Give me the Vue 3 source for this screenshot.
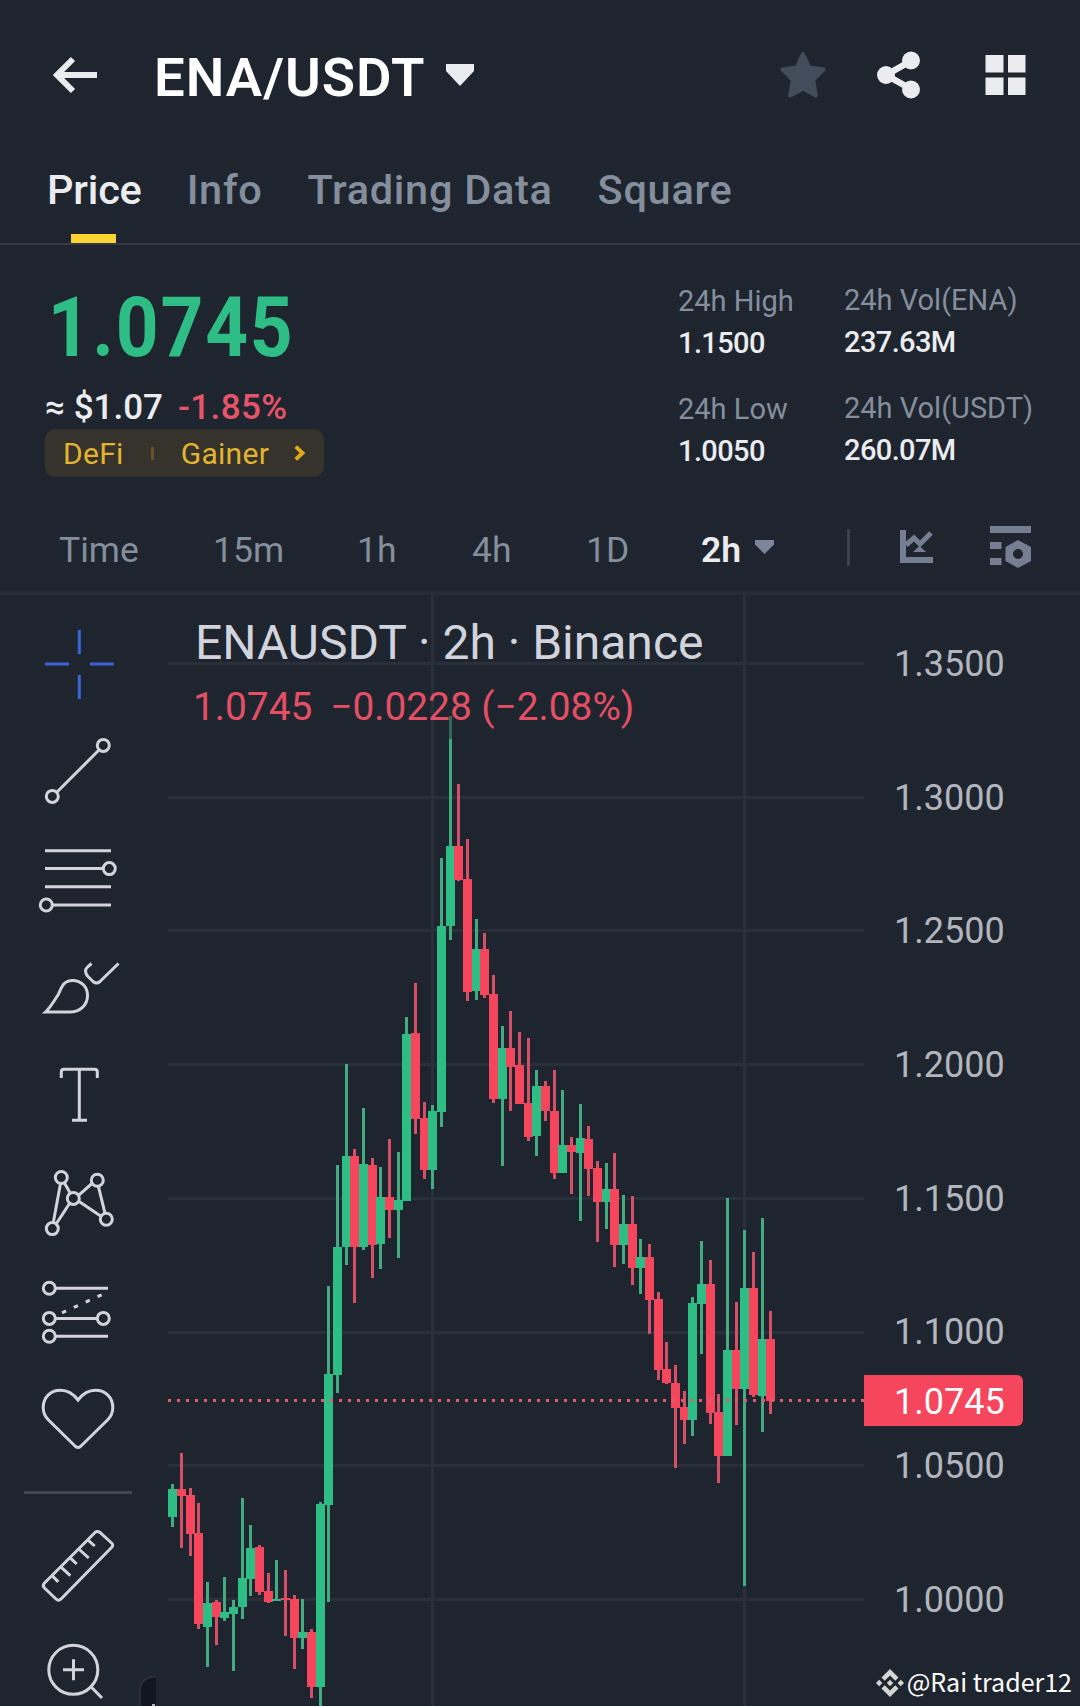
<template>
  <div class="trade-page">
    <header class="top-bar">
      <svg class="back-icon" viewBox="0 0 46 38">
        <path d="M45 19H5M21 3L5 19L21 35" fill="none" stroke="#eaecef" stroke-width="6" />
      </svg>
      <h1 class="pair-name">ENA/USDT</h1>
      <svg class="pair-caret" viewBox="0 0 28 22">
        <path d="M0 0H28V7L14 22L0 7Z" fill="#eaecef" />
      </svg>
      <div class="top-actions">
        <svg class="star-icon" viewBox="0 0 46 48">
          <path
            d="M23 3L29.3 16.5L43.5 18.5L33.2 28.8L35.8 44.5L23 37.5L10.2 44.5L12.8 28.8L2.5 18.5L16.7 16.5Z"
            fill="#434c5a" stroke="#434c5a" stroke-width="4" stroke-linejoin="round"
          />
        </svg>
        <svg class="share-icon" viewBox="0 0 43 48">
          <path d="M34 10L9 24L34 38" fill="none" stroke="#eaecef" stroke-width="6.5" />
          <circle cx="9" cy="24" r="9" fill="#eaecef" />
          <circle cx="34" cy="9.5" r="9" fill="#eaecef" />
          <circle cx="34" cy="38.5" r="9" fill="#eaecef" />
        </svg>
        <svg class="grid-icon" viewBox="0 0 40 40">
          <path d="M0 0H18V17.5H0ZM22.5 0H40V17.5H22.5ZM0 22.5H18V40H0ZM22.5 22.5H40V40H22.5Z" fill="#eaecef" />
        </svg>
      </div>
    </header>

    <nav class="tabs">
      <div
        v-for="tab in tabs"
        :key="tab"
        class="tab"
        :class="{ active: tab === activeTab }"
        @click="activeTab = tab"
      >
        {{ tab }}
      </div>
    </nav>

    <section class="ticker">
      <div class="ticker-main">
        <div class="last-price">1.0745</div>
        <div class="fiat-row">
          <span class="fiat">≈ $1.07</span>
          <span class="change">-1.85%</span>
        </div>
        <div class="tag-chip">
          <span>DeFi</span>
          <i class="chip-divider"></i>
          <span>Gainer</span>
          <svg class="chip-arrow" viewBox="0 0 12 16">
            <path d="M1.8 1.5L8.6 8L1.8 14.5" fill="none" stroke="#e0a91a" stroke-width="4" />
          </svg>
        </div>
      </div>
      <div class="stats">
        <div v-for="s in stats" :key="s.label" class="stat">
          <div class="stat-label">{{ s.label }}</div>
          <div class="stat-value">{{ s.value }}</div>
        </div>
      </div>
    </section>

    <section class="intervals">
      <span class="interval">Time</span>
      <span class="interval">15m</span>
      <span class="interval">1h</span>
      <span class="interval">4h</span>
      <span class="interval">1D</span>
      <span class="interval current">2h</span>
      <svg class="interval-caret" viewBox="0 0 19 14">
        <path d="M0 0H19V4.5L9.5 14L0 4.5Z" fill="#7d8698" />
      </svg>
      <i class="interval-divider"></i>
      <svg class="chart-icon" viewBox="0 0 33 33">
        <path d="M0 0H6V27H33V33H0Z" fill="#767f92" />
        <path d="M6 15L14 8L20 14L31 3" fill="none" stroke="#767f92" stroke-width="5" />
        <path d="M13 22L19.5 16L26 22Z" fill="#767f92" />
      </svg>
      <svg class="settings-icon" viewBox="0 0 41 42">
        <path d="M0 0H41V7H0ZM0 16H11.5V23H0ZM0 32H11.5V39H0Z" fill="#767f92" />
        <path
          d="M28 14L41 21V35L28 42L15.5 35V21ZM28 23A5 5 0 1 0 28 33A5 5 0 1 0 28 23Z"
          fill="#767f92" fill-rule="evenodd"
        />
      </svg>
    </section>

    <main class="chart">
      <aside class="tools">
        <svg class="tool cross" viewBox="0 0 84 84">
          <path d="M8 42H32M53 42H77M42.3 8V32M42.3 53V77" />
        </svg>
        <svg class="tool" viewBox="0 0 84 84">
          <circle cx="15.3" cy="66.4" r="6" />
          <circle cx="66.3" cy="15.4" r="6" />
          <path d="M20 62L62 20" />
        </svg>
        <svg class="tool" viewBox="0 0 84 84">
          <path d="M8 12.7H74M8 30.6H66M8 48.7H74M15 67H74" />
          <circle cx="72.3" cy="30.6" r="6" />
          <circle cx="9.3" cy="67" r="6" />
        </svg>
        <svg class="tool" viewBox="0 0 84 84">
          <path d="M8.5 67C14 62 17.5 55 21 50C24.5 43 26 35.5 35.5 35.5C44.5 35.5 50.5 42 50.5 50.5C50.5 60 43 67 33 67Z" />
          <path d="M81.5 18.5L63 36.5Q59.5 39.5 56 36.5L50.5 31Q46.5 26 50.5 22L54.5 18.5" />
        </svg>
        <svg class="tool" viewBox="0 0 84 84">
          <path d="M24.3 25V19Q24.3 16.3 27 16.3H57.6Q60.3 16.3 60.3 19V25M42.3 16.3V67M35 67.3H50" />
        </svg>
        <svg class="tool" viewBox="0 0 84 84">
          <circle cx="24.3" cy="16.5" r="6" />
          <circle cx="60.3" cy="19.3" r="6" />
          <circle cx="36.3" cy="37.4" r="6" />
          <circle cx="69.3" cy="58.3" r="6" />
          <circle cx="15.3" cy="67.6" r="6" />
          <path d="M23.5 22.5L16.3 61.5M27.3 21.7L33.3 32.2M32.5 42.5L19.3 62.8M41.5 34.3L55 22.5M41.7 40.3L64 55.3M61.4 25.3L68 52.3" />
        </svg>
        <svg class="tool" viewBox="0 0 84 84">
          <circle cx="12.3" cy="20.3" r="6" />
          <circle cx="12.3" cy="50.4" r="6" />
          <circle cx="66.3" cy="50.4" r="6" />
          <circle cx="12.3" cy="68.2" r="6" />
          <path d="M18 20.3H71M18 50.4H60M18 68.2H71" />
          <path d="M25 44.8L67 25.8" stroke-dasharray="4.5 8.5" />
        </svg>
        <svg class="tool" viewBox="0 0 84 84">
          <path d="M41 24C36.5 18 30.5 14.2 23.5 14.2C13.5 14.2 6.2 21.5 6.2 31.5C6.2 37 8 40.5 11.5 44L38.5 70.5Q41 72.5 43.5 70.5L70.5 44C74 40.5 75.8 37 75.8 31.5C75.8 21.5 68.5 14.2 58.5 14.2C51.5 14.2 45.5 18 41 24Z" />
        </svg>
        <hr class="tools-divider">
        <svg class="tool" viewBox="0 0 84 84">
          <path d="M58 8.5Q60.5 6.5 63 8.5L74.5 19Q77 21.2 74.5 23.5L24 75Q21.5 77.5 19 75L7.5 64Q5 61.5 7.5 59Z" />
          <path d="M51.3 16.3L57.7 22M42.3 25.5L51.7 34M33.7 34.4L39.7 40M24 43.2L33.3 51.7M15 51.7L21.3 57.8" />
        </svg>
        <svg class="tool" viewBox="0 0 84 84">
          <circle cx="36.3" cy="37.8" r="24.5" />
          <path d="M26 37.8H47M36.5 27.3V48.3M53.7 54.5L65 66" />
        </svg>
        <div class="tools-toggle"><i></i></div>
      </aside>

      <svg class="plot" viewBox="168 591 696 1115">
        <g fill="#2a303a">
          <rect v-for="y in gridRows" :key="y" x="168" :y="y - 1.5" width="696" height="3" />
          <rect x="431" y="591" width="3" height="1115" />
          <rect x="743" y="591" width="3" height="1115" />
        </g>
        <g v-for="c in candles" :key="c.x" :class="c.up ? 'up' : 'down'">
          <rect class="wick" :x="c.x - 1" :y="c.high" width="3" :height="c.low - c.high" />
          <rect class="body" :x="c.x - 4" :y="c.top" width="9" :height="c.bottom - c.top" />
        </g>
        <rect x="449" y="700" width="4" height="39" fill="#1f252f" opacity="0.5" />
        <line class="last-line" x1="168" y1="1400.5" x2="864" y2="1400.5" />
      </svg>

      <div class="axis">
        <div v-for="p in axisLabels" :key="p" class="axis-label">{{ p }}</div>
        <div class="axis-tag">1.0745</div>
      </div>

      <div class="legend">
        <div class="legend-title">ENAUSDT · 2h · Binance</div>
        <div class="legend-values">
          <span>1.0745</span>
          <span>−0.0228 (−2.08%)</span>
        </div>
      </div>
    </main>

    <div class="watermark">
      <svg viewBox="0 0 28 28">
        <path
          d="M14 0L22.5 8.5L19.3 11.7L14 6.4L8.7 11.7L5.5 8.5ZM3.2 10.8L6.4 14L3.2 17.2L0 14ZM14 10.8L17.2 14L14 17.2L10.8 14ZM24.8 10.8L28 14L24.8 17.2L21.6 14ZM8.7 16.3L14 21.6L19.3 16.3L22.5 19.5L14 28L5.5 19.5Z"
          fill="#d5d5d5"
        />
      </svg>
      <span>@Rai trader12</span>
    </div>
  </div>
</template>

<script setup>
import { ref } from 'vue';

const tabs = ['Price', 'Info', 'Trading Data', 'Square'];
const activeTab = ref('Price');

const stats = [
  { label: '24h High', value: '1.1500' },
  { label: '24h Vol(ENA)', value: '237.63M' },
  { label: '24h Low', value: '1.0050' },
  { label: '24h Vol(USDT)', value: '260.07M' }
];

const axisLabels = ['1.3500', '1.3000', '1.2500', '1.2000', '1.1500', '1.1000', '1.0500', '1.0000'];
const gridRows = axisLabels.map((_, i) => Math.round(663 + i * 133.7) + 0.5);

// [up, high, body top, body bottom, low]
const rows = [
  [1, 1484, 1489, 1517, 1527], [0, 1453, 1489, 1496, 1548], [0, 1488, 1495, 1534, 1556],
  [0, 1503, 1533, 1624, 1629], [1, 1582, 1603, 1627, 1667], [0, 1600, 1602, 1617, 1645],
  [1, 1577, 1612, 1618, 1621], [1, 1600, 1607, 1614, 1671], [1, 1498, 1578, 1607, 1619],
  [1, 1525, 1548, 1579, 1596], [0, 1545, 1547, 1592, 1595], [0, 1573, 1591, 1602, 1603],
  [1, 1560, 1599, 1601, 1601], [0, 1570, 1598, 1600, 1636], [0, 1595, 1599, 1638, 1669],
  [1, 1599, 1632, 1638, 1649], [0, 1629, 1632, 1687, 1698], [1, 1502, 1504, 1687, 1706],
  [1, 1286, 1374, 1505, 1602], [1, 1165, 1247, 1375, 1393], [1, 1064, 1156, 1247, 1265],
  [0, 1149, 1156, 1247, 1303], [1, 1108, 1164, 1247, 1250], [0, 1158, 1165, 1245, 1278],
  [1, 1167, 1197, 1244, 1269], [0, 1139, 1197, 1210, 1238], [1, 1152, 1200, 1210, 1258],
  [1, 1017, 1034, 1201, 1201], [0, 983, 1033, 1119, 1134], [0, 1102, 1118, 1170, 1179],
  [1, 1105, 1111, 1170, 1189], [1, 858, 926, 1112, 1127], [1, 716, 846, 926, 940],
  [0, 784, 846, 880, 881], [0, 839, 879, 992, 1001], [1, 919, 949, 991, 1000],
  [0, 933, 949, 995, 998], [0, 975, 994, 1099, 1103], [1, 1026, 1048, 1099, 1166],
  [0, 1011, 1048, 1067, 1111], [0, 1032, 1065, 1104, 1104], [0, 1038, 1103, 1137, 1141],
  [1, 1070, 1086, 1136, 1156], [0, 1081, 1086, 1111, 1121], [0, 1070, 1111, 1173, 1179],
  [1, 1090, 1145, 1173, 1173], [0, 1137, 1145, 1152, 1194], [1, 1104, 1138, 1153, 1221],
  [0, 1126, 1139, 1169, 1196], [0, 1161, 1168, 1202, 1242], [1, 1163, 1189, 1202, 1229],
  [0, 1153, 1189, 1245, 1267], [1, 1195, 1224, 1245, 1264], [0, 1196, 1224, 1268, 1285],
  [1, 1239, 1257, 1268, 1294], [0, 1244, 1257, 1300, 1334], [0, 1292, 1299, 1370, 1380],
  [0, 1342, 1369, 1383, 1384], [0, 1365, 1383, 1408, 1468], [0, 1391, 1407, 1420, 1444],
  [1, 1297, 1303, 1420, 1436], [1, 1241, 1284, 1304, 1354], [0, 1260, 1284, 1413, 1424],
  [0, 1394, 1412, 1456, 1483], [1, 1198, 1350, 1456, 1456], [0, 1302, 1350, 1389, 1425],
  [1, 1230, 1288, 1389, 1586], [0, 1252, 1288, 1395, 1397], [1, 1218, 1339, 1396, 1432],
  [0, 1311, 1339, 1401, 1414]
];

const candles = rows.map(([up, high, top, bottom, low], i) => ({
  x: Math.round(172.2 + i * 8.667),
  up,
  high,
  top,
  bottom,
  low
}));
</script>

<style>
body {
  background: #1f252f;
}
</style>

<style scoped>
.trade-page {
  position: relative;
  width: 1080px;
  height: 1706px;
  overflow: hidden;
  background: #1f252f;
  color: #eaecef;
  font-family: Roboto, "Liberation Sans", sans-serif;
}

.top-bar {
  display: flex;
  align-items: center;
  height: 150px;
  padding: 0 54px 0 52px;
  box-sizing: border-box;
}

.back-icon {
  width: 46px;
  height: 38px;
}

.pair-name {
  margin: 3px 0 0 56px;
  width: 267px;
  font-size: 54.5px;
  line-height: 64px;
  font-weight: 600;
  letter-spacing: 1px;
  color: #fff;
  white-space: nowrap;
}

.pair-caret {
  width: 28px;
  height: 22px;
  margin-left: 25px;
}

.top-actions {
  display: flex;
  align-items: center;
  margin-left: auto;
}

.star-icon {
  width: 46px;
  height: 48px;
}

.share-icon {
  width: 43px;
  height: 48px;
  margin-left: 51px;
}

.grid-icon {
  width: 41px;
  height: 40px;
  margin-left: 65px;
}

.tabs {
  display: flex;
  gap: 45px;
  height: 95px;
  padding-left: 47px;
  border-bottom: 2px solid #333a45;
  box-sizing: border-box;
}

.tab {
  position: relative;
  height: 93px;
  padding-top: 15px;
  box-sizing: border-box;
  font-size: 41.5px;
  line-height: 50px;
  font-weight: 500;
  letter-spacing: 0.7px;
  color: #848e9c;
  white-space: nowrap;
}

.tab.active {
  letter-spacing: -0.2px;
  color: #eaecef;
}

.tab.active::after {
  content: '';
  position: absolute;
  left: 24px;
  bottom: 0;
  width: 45px;
  height: 9px;
  background: #fcd535;
}

.ticker {
  display: flex;
  justify-content: space-between;
  height: 265px;
  padding: 0 0 0 45px;
  box-sizing: border-box;
}

.ticker-main {
  padding-top: 33px;
}

.last-price {
  width: 279px;
  height: 100px;
  padding-left: 3px;
  box-sizing: border-box;
  font-size: 84px;
  line-height: 100px;
  font-weight: 700;
  letter-spacing: 2px;
  color: #2ebd85;
  transform: scaleX(0.89);
  transform-origin: left;
}

.fiat-row {
  display: flex;
  gap: 15px;
  height: 51px;
  font-size: 35px;
  line-height: 60px;
  font-weight: 500;
}

.change {
  letter-spacing: 0.4px;
  color: #e5546a;
}

.tag-chip {
  display: flex;
  align-items: center;
  width: 279px;
  height: 48px;
  padding: 0 18px;
  border-radius: 10px;
  box-sizing: border-box;
  background: #35332c;
  color: #e3b431;
  font-size: 30px;
  letter-spacing: 0.3px;
}

.chip-divider {
  width: 3px;
  height: 13px;
  margin: 0 27px 0 27px;
  background: #695324;
}

.chip-arrow {
  width: 12px;
  height: 16px;
  margin-left: 25px;
}

.stats {
  display: grid;
  grid-template-columns: 166px 236px;
  grid-template-rows: 108px 108px;
  padding-top: 34px;
}

.stat {
  font-size: 29px;
  line-height: 42px;
  white-space: nowrap;
}

.stat:nth-child(odd) {
  padding-top: 1px;
}

.stat-label {
  color: #848e9c;
}

.stat-value {
  font-weight: 500;
  letter-spacing: -0.6px;
}

.intervals {
  display: grid;
  grid-template-columns: 154px 144px 115px 114px 115px 54px 92px 53px 90px 41px;
  align-items: center;
  height: 81px;
  padding: 0 0 7px 59px;
  box-sizing: border-box;
  font-size: 35.5px;
  color: #848e9c;
}

.interval {
  padding-top: 5px;
}

.interval.current {
  color: #eaecef;
  font-weight: 600;
}

.interval-caret {
  width: 19px;
  height: 14px;
}

.interval-divider {
  width: 3px;
  height: 37px;
  background: #3a414d;
}

.chart-icon {
  width: 33px;
  height: 33px;
  margin-bottom: 2px;
}

.settings-icon {
  width: 41px;
  height: 42px;
}

.chart {
  position: relative;
  display: grid;
  grid-template-columns: 168px 696px 216px;
  height: 1115px;
}

.chart::before {
  content: '';
  position: absolute;
  top: 0;
  left: 0;
  width: 100%;
  height: 4px;
  background: #262c36;
}

.tools {
  display: flex;
  flex-direction: column;
  padding-top: 19.5px;
}

.tool {
  flex: none;
  width: 84px;
  height: 84px;
  margin: 11.85px 0 11.85px 37px;
  overflow: visible;
  fill: none;
  stroke: #d1d4dc;
  stroke-width: 3;
}

.tool.cross {
  stroke: #3a64d8;
}

.tools-divider {
  flex: none;
  width: 108px;
  height: 3px;
  margin: 19px 0 18px 24px;
  border: 0;
  background: #434651;
}

.tools-toggle {
  position: absolute;
  left: 139px;
  bottom: 0;
  width: 17px;
  height: 30px;
  border: 2px solid #2a2e39;
  border-width: 2px 0 0 2px;
  border-radius: 14px 0 0;
  box-sizing: border-box;
  background: #101520;
}

.tools-toggle i {
  position: absolute;
  right: 1px;
  bottom: 0;
  width: 3px;
  height: 2px;
  background: #b2b5be;
}

.plot {
  width: 696px;
  height: 1115px;
}

.up .wick {
  fill: #42ab80;
}

.up .body {
  fill: #2ebd85;
}

.down .wick {
  fill: #d64f66;
}

.down .body {
  fill: #f6465d;
}

.last-line {
  stroke: #dd5a70;
  stroke-width: 3;
  stroke-dasharray: 3 6;
}

.axis {
  position: relative;
  padding-top: 7px;
}

.axis-label {
  height: 133.7px;
  padding-left: 30px;
  font-size: 36px;
  line-height: 133.7px;
  color: #b2b5be;
}

.axis-tag {
  position: absolute;
  top: 784px;
  left: 0;
  width: 159px;
  height: 51px;
  padding-left: 30px;
  border-radius: 0 6px 6px 0;
  box-sizing: border-box;
  background: #f6465d;
  color: #fff;
  font-size: 36px;
  line-height: 54px;
}

.legend {
  position: absolute;
  top: 23px;
  left: 193px;
  color: #d1d4dc;
  white-space: nowrap;
}

.legend-title {
  padding-left: 2px;
  font-size: 48px;
  line-height: 58px;
}

.legend-values {
  display: flex;
  gap: 18px;
  margin-top: 9px;
  font-size: 38.8px;
  line-height: 52px;
  color: #e54f65;
}

.watermark {
  position: absolute;
  right: 8px;
  bottom: 7px;
  display: flex;
  align-items: center;
  gap: 3px;
  color: #fff;
  font-family: "Noto Sans CJK SC", sans-serif;
  font-size: 25px;
  line-height: 36px;
}

.watermark svg {
  width: 28px;
  height: 28px;
}

.watermark span {
  margin-top: -4px;
}
</style>
